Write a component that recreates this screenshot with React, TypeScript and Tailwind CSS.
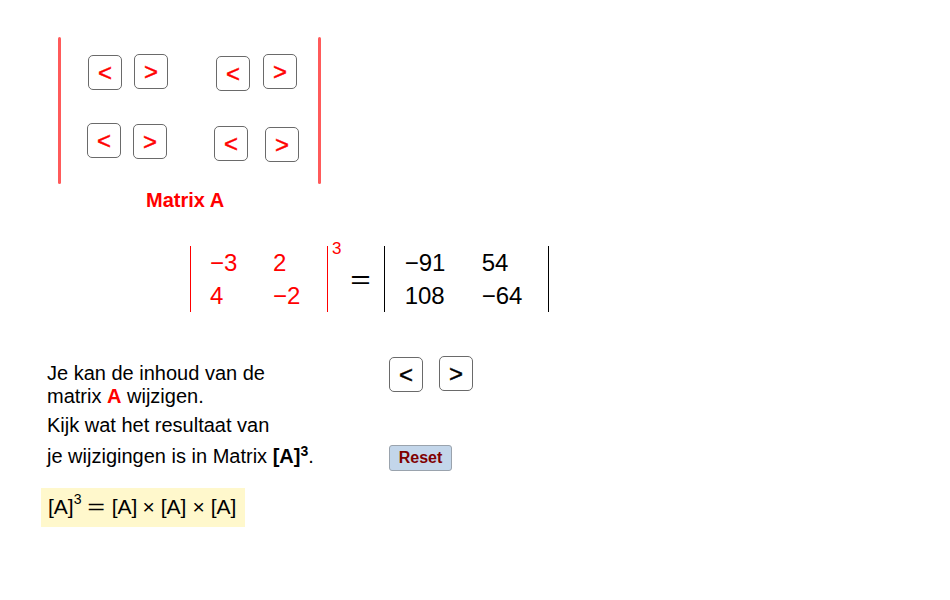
import React from 'react';

interface BtnProps {
  label: string;
  className: string;
}

function StepButton({ label, className }: BtnProps) {
  return (
    <button
      className={`flex h-[35px] w-[34px] shrink-0 items-center justify-center rounded-[5px] border-[1.5px] border-[#6a6a6a] bg-white text-[24px] leading-none [-webkit-text-stroke:0.4px] ${className}`}
    >
      {label}
    </button>
  );
}

const redBar = 'w-[3px] h-[147px] rounded-full bg-[#ff5a5a]';

export default function App() {
  return (
    <div className="relative h-[600px] w-[950px] overflow-hidden bg-white font-['Liberation_Sans',Arial,sans-serif] text-black">
      {/* matrix A editor */}
      <div className="flex items-start pl-[58px] pt-[37px]">
        <div className={redBar} />
        <div className="w-[257px]">
          <div className="mt-[17px] flex items-start">
            <StepButton label="<" className="ml-[27px] mt-[1px] text-[#ff0000]" />
            <StepButton label=">" className="ml-[12px] text-[#ff0000]" />
            <StepButton label="<" className="ml-[48px] mt-[2px] text-[#ff0000]" />
            <StepButton label=">" className="ml-[13px] text-[#ff0000]" />
          </div>
          <div className="mt-[32px] flex items-start">
            <StepButton label="<" className="ml-[26px] text-[#ff0000]" />
            <StepButton label=">" className="ml-[12px] mt-[1px] text-[#ff0000]" />
            <StepButton label="<" className="ml-[47px] mt-[3px] text-[#ff0000]" />
            <StepButton label=">" className="ml-[17px] mt-[4px] text-[#ff0000]" />
          </div>
        </div>
        <div className={redBar} />
      </div>
      <div className="mt-[5px] pl-[146px] text-[20px] font-bold leading-[23px] text-[#ff0000]">Matrix A</div>

      {/* A^3 = result */}
      <div className="mt-[34px] flex items-start pl-[190px] text-[24px] leading-[33px]">
        <div className="grid h-[66px] grid-cols-[63px_54px] border-x border-[#ff0000] pl-[19px] text-[#ff0000]">
          <span>−3</span>
          <span>2</span>
          <span>4</span>
          <span>−2</span>
        </div>
        <span className="-mt-[6px] ml-[4px] text-[17px] leading-none text-[#ff0000]">3</span>
        <span className="ml-[12px] inline-block scale-x-[1.35] self-center text-[26px] leading-none">=</span>
        <div className="ml-[15px] grid h-[66px] grid-cols-[77px_66px] border-x border-black pl-[20px]">
          <span>−91</span>
          <span>54</span>
          <span>108</span>
          <span>−64</span>
        </div>
      </div>

      {/* explanation + controls */}
      <div className="mt-[44px] flex items-start pl-[47px] text-[20px] leading-[23px]">
        <div className="w-[342px] pt-[6px]">
          <p>
            Je kan de inhoud van de
            <br />
            matrix <b className="text-[#ff0000]">A</b> wijzigen.
          </p>
          <p className="mt-[6px]">Kijk wat het resultaat van</p>
          <p className="mt-[8px]">
            je wijzigingen is in Matrix{' '}
            <b>
              [A]<sup className="text-[14px]">3</sup>
            </b>
            .
          </p>
        </div>
        <div>
          <div className="flex items-start">
            <StepButton label="<" className="mt-[1px] text-black" />
            <StepButton label=">" className="ml-[16px] text-black" />
          </div>
          <button className="mt-[53px] h-[26px] w-[63px] rounded-[3px] border border-[#9aa3ad] bg-[#c3d6ea] text-[16px] font-bold leading-none text-[#800000]">
            Reset
          </button>
        </div>
      </div>

      <div className="ml-[41px] mt-[17px] flex h-[39px] w-[204px] items-center bg-[#fff8cc] pb-[3px] pl-[7px] text-[21px] leading-none">
        <span>[A]</span>
        <sup className="text-[14px]">3</sup>
        <span className="ml-[9px] inline-block scale-x-[1.45]">=</span>
        <span className="ml-[9px]">[A]</span>
        <span className="ml-[5px]">×</span>
        <span className="ml-[6px]">[A]</span>
        <span className="ml-[6px]">×</span>
        <span className="ml-[6px]">[A]</span>
      </div>
    </div>
  );
}
